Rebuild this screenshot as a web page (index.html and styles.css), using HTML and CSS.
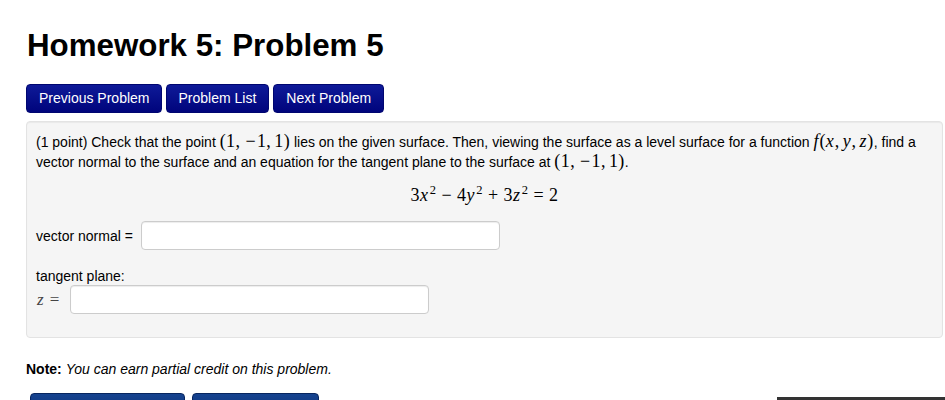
FILE: index.html
```html
<!DOCTYPE html>
<html>
<head>
<meta charset="utf-8">
<link rel="stylesheet" href="styles.css">
</head>
<body>
<div class="page">
  <h1 class="title">Homework 5: Problem 5</h1>
  <div class="nav">
    <a class="nav-btn">Previous Problem</a>
    <a class="nav-btn">Problem List</a>
    <a class="nav-btn">Next Problem</a>
  </div>
  <div class="well">
    <p class="statement">(1 point) Check that the point <span class="math">(1,<span class="th"></span><span class="op">−</span>1,<span class="th"></span>1)</span> lies on the given surface. Then, viewing the surface as a level surface for a function <span class="math"><i>f</i>(<i>x</i>,<span class="th"></span><i>y</i>,<span class="th"></span><i>z</i>)</span>, find a vector normal to the surface and an equation for the tangent plane to the surface at <span class="math">(1,<span class="th"></span><span class="op">−</span>1,<span class="th"></span>1)</span>.</p>
    <div class="display"><span class="math">3<i>x</i><sup>2</sup><span class="bin">−</span>4<i>y</i><sup>2</sup><span class="bin">+</span>3<i>z</i><sup>2</sup><span class="rel">=</span>2</span></div>
    <div class="answer-row">
      <span class="label">vector normal =</span>
      <input class="answer" type="text">
    </div>
    <div class="sub-label">tangent plane:</div>
    <div class="answer-row">
      <span class="label math-label"><i>z</i><span class="rel-sm">=</span></span>
      <input class="answer" type="text">
    </div>
  </div>
  <p class="note"><b>Note:</b> <i>You can earn partial credit on this problem.</i></p>
  <div class="submit-row">
    <button class="submit-btn submit-preview">Preview My Answers</button>
    <button class="submit-btn submit-check">Submit Answers</button>
  </div>
</div>
<div class="corner-bar"></div>
</body>
</html>
```

FILE: styles.css
```css
html, body {
  margin: 0;
  padding: 0;
  background: #fff;
  overflow: hidden;
}
body {
  font-family: "Liberation Sans", Arial, sans-serif;
  font-size: 14px;
  color: #000;
}
.page {
  padding: 0 2px 0 26px;
}
.title {
  margin: 27px 0 19px 0;
  font-size: 31.3px;
  line-height: 38px;
  font-weight: bold;
  color: #000;
  padding-left: 1px;
}
.nav {
  display: flex;
  gap: 4px;
  height: 29px;
}
.nav-btn {
  display: block;
  box-sizing: border-box;
  height: 29px;
  padding: 0 12px;
  line-height: 27px;
  font-size: 14px;
  color: #fff;
  background: linear-gradient(#0e1a98, #00047c);
  border: 1px solid #000670;
  border-radius: 4px;
}
.nav-btn:first-child {
  padding: 0 11px 0 12px;
}
.well {
  margin-top: 8px;
  background: #f5f5f5;
  border: 1px solid #e3e3e3;
  border-radius: 4px;
  box-shadow: inset 0 1px 1px rgba(0,0,0,0.05);
  padding: 10px 9px 23px 9px;
}
.statement {
  margin: 0;
  line-height: 20px;
  padding-right: 10px;
}
.math {
  font-family: "Liberation Serif", "Times New Roman", serif;
  font-size: 18px;
  line-height: 0;
  white-space: nowrap;
  letter-spacing: 0.4px;
}
.math i {
  font-style: italic;
  margin-right: 0.5px;
}
.th {
  display: inline-block;
  width: 3px;
}
.op {
  margin: 0 1px 0 2px;
}
.math sup {
  font-size: 12.5px;
  line-height: 0;
  vertical-align: 7px;
  margin-left: 1px;
}
.bin {
  margin: 0 5px;
}
.rel {
  margin: 0 5px;
}
.display {
  margin-top: 11px;
  line-height: 24px;
  height: 24px;
  text-align: center;
}
.display .math {
  font-size: 18px;
  line-height: 24px;
}
.answer-row {
  display: flex;
  align-items: center;
  gap: 8px;
  margin-top: 14px;
}
.sub-label + .answer-row {
  margin-top: 0;
}
.label {
  line-height: 20px;
  flex: none;
}
.math-label {
  font-family: "Liberation Serif", "Times New Roman", serif;
  font-size: 17px;
  color: #444;
  width: 26px;
  padding-left: 1px;
  box-sizing: border-box;
}
.rel-sm {
  margin-left: 6px;
}
.answer {
  flex: none;
  box-sizing: border-box;
  width: 359px;
  height: 29px;
  margin: 0;
  border: 1px solid #ccc;
  border-radius: 4px;
  background: #fff;
  box-shadow: inset 0 1px 1px rgba(0,0,0,0.075);
  font-family: "Liberation Sans", Arial, sans-serif;
  font-size: 14px;
  padding: 4px 6px;
}
.sub-label {
  margin-top: 17px;
  line-height: 18px;
}
.note {
  margin: 21px 0 0 0;
  line-height: 20px;
}
.note b {
  font-weight: bold;
}
.submit-row {
  display: flex;
  gap: 7px;
  margin-top: 14px;
  padding-left: 4px;
}
.submit-btn {
  box-sizing: border-box;
  height: 34px;
  padding: 16px 12px 0 12px;
  font-family: "Liberation Sans", Arial, sans-serif;
  font-size: 14px;
  color: #fff;
  background: linear-gradient(#16438f, #0a2c72);
  border: 1px solid #08265f;
  border-radius: 4px;
}
.submit-preview {
  width: 155px;
}
.submit-check {
  width: 127px;
}
.corner-bar {
  position: absolute;
  left: 777px;
  top: 397px;
  width: 168px;
  height: 30px;
  background: #333;
}
```
